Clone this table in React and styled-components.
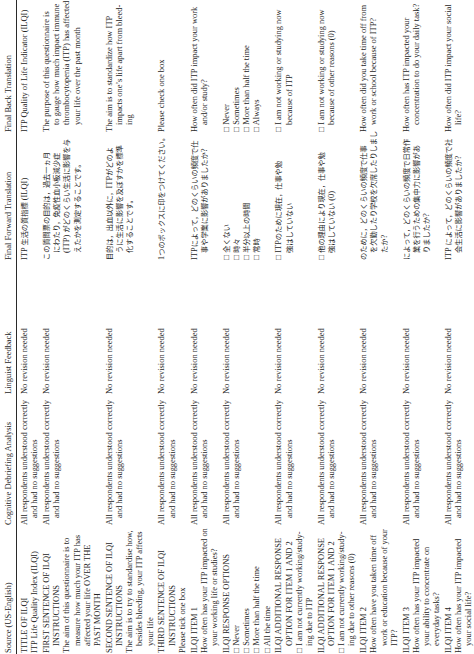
import React from "react";
import styled, { createGlobalStyle } from "styled-components";

const Global = createGlobalStyle`
  html, body { margin: 0; padding: 0; background: #ffffff; }
  body { overflow: hidden; }
`;

const Viewport = styled.div`
  width: 474px;
  height: 654px;
  overflow: hidden;
  position: relative;
  background: #ffffff;
`;

/* The page is a landscape table printed sideways: lay it out 654 wide, 474 tall, then turn it. */
const Sheet = styled.div`
  width: 654px;
  height: 474px;
  transform-origin: top left;
  transform: translateY(654px) rotate(-90deg);
  font-family: "Liberation Serif", "Noto Sans CJK JP", serif;
  font-size: 8.45px;
  line-height: 10.2px;
  color: #262626;
  overflow: hidden;
`;

const Table = styled.div`
  display: flex;
  flex-direction: column;
  padding-top: 1px;
`;

const COLS = "129px 131px 134px 128px 132px";

const HeaderRow = styled.div`
  display: grid;
  grid-template-columns: ${COLS};
  padding: 2px 0 3px;
  border-bottom: 1.2px solid #2a2a2a;
  margin-bottom: 1px;
`;

const Row = styled.div`
  display: grid;
  grid-template-columns: ${COLS};
  padding: 0.8px 0;
`;

const Cell = styled.div`
  padding-left: ${(p) => (p.$first ? "1px" : "0")};
  display: flex;
  flex-direction: column;
`;

const Para = styled.div`
  display: flex;
  flex-direction: column;
`;

const Line = styled.span`
  display: block;
  white-space: nowrap;
  padding-left: ${(p) => (p.$indent ? "7px" : "0")};
`;

const Jp = styled.span`
  font-family: "Noto Sans CJK JP", sans-serif;
  font-size: 7.2px;
`;

const CJK = /([\u3000-\u30ff\u4e00-\u9fff\uff00-\uffef]+)/;

function Mixed({ text }) {
  return text
    .split(CJK)
    .filter(Boolean)
    .map((part, i) => (CJK.test(part) ? <Jp key={i}>{part}</Jp> : <React.Fragment key={i}>{part}</React.Fragment>));
}

const COG = [["All respondents understood correctly", "and had no suggestions"]];
const LING = [["No revision needed"]];

const rows = [
  {
    src: [["TITLE OF ILQI"], ["ITP Life Quality Index (ILQI)"]],
    fft: [["ITP 生活の質指標 (ILQI)"]],
    fbt: [["ITP Quality of Life Indicator (ILQI)"]],
  },
  {
    src: [
      ["FIRST SENTENCE OF ILQI", "INSTRUCTIONS"],
      [
        "The aim of this questionnaire is to",
        "measure how much your ITP has",
        "affected your life OVER THE",
        "PAST MONTH",
      ],
    ],
    fft: [
      [
        "この質問票の目的は，過去一ヵ月",
        "にわたり，免疫性血小板減少症",
        "(ITP) がどのくらい生活に影響を与",
        "えたかを測定することです。",
      ],
    ],
    fbt: [
      [
        "The purpose of this questionnaire is",
        "to gauge how much impact immune",
        "thrombocytopenia (ITP) has affected",
        "your life over the past month",
      ],
    ],
  },
  {
    src: [
      ["SECOND SENTENCE OF ILQI", "INSTRUCTIONS"],
      [
        "The aim is to try to standardise how,",
        "besides bleeding, your ITP affects",
        "your life",
      ],
    ],
    fft: [
      [
        "目的は，出血以外に，ITPがどのよ",
        "うに生活に影響を及ぼすかを標準",
        "化することです。",
      ],
    ],
    fbt: [
      [
        "The aim is to standardize how ITP",
        "impacts one’s life apart from bleed-",
        "ing",
      ],
    ],
  },
  {
    src: [["THIRD SENTENCE OF ILQI", "INSTRUCTIONS"], ["Please tick one box"]],
    fft: [["1つのボックスに印をつけてください。"]],
    fbt: [["Please check one box"]],
  },
  {
    src: [
      ["ILQI ITEM 1"],
      ["How often has your ITP impacted on", "your working life or studies?"],
    ],
    fft: [["ITPによって，どのくらいの頻度で仕", "事や学業に影響がありましたか?"]],
    fbt: [["How often did ITP impact your work", "and/or study?"]],
  },
  {
    src: [
      ["ILQI RESPONSE OPTIONS"],
      ["□ Never"],
      ["□ Sometimes"],
      ["□ More than half the time"],
      ["□ All the time"],
    ],
    fft: [["□ 全くない"], ["□ 時々"], ["□ 半分以上の時間"], ["□ 常時"]],
    fbt: [["□ Never"], ["□ Sometimes"], ["□ More than half the time"], ["□ Always"]],
  },
  {
    src: [
      ["ILQI ADDITIONAL RESPONSE", "OPTION FOR ITEM 1 AND 2"],
      ["□ I am not currently working/study-", "ing due to ITP"],
    ],
    fft: [["□ ITPのために現在，仕事や勉", "強はしていない"]],
    fbt: [["□ I am not working or studying now", "because of ITP"]],
  },
  {
    src: [
      ["ILQI ADDITIONAL RESPONSE", "OPTION FOR ITEM 1 AND 2"],
      ["□ I am not currently working/study-", "ing due to other reasons (0)"],
    ],
    fft: [["□ 他の理由により現在，仕事や勉", "強はしていない (0)"]],
    fbt: [["□ I am not working or studying now", "because of other reasons (0)"]],
  },
  {
    src: [
      ["ILQI ITEM 2"],
      [
        "How often have you taken time off",
        "work or education because of your",
        "ITP?",
      ],
    ],
    fft: [
      [
        "のために，どのくらいの頻度で仕事",
        "を欠勤したり学校を欠席したりしまし",
        "たか?",
      ],
    ],
    fbt: [["How often did you take time off from", "work or school because of ITP?"]],
  },
  {
    src: [
      ["ILQI ITEM 3"],
      [
        "How often has your ITP impacted",
        "your ability to concentrate on",
        "everyday tasks?",
      ],
    ],
    fft: [
      [
        "によって，どのくらいの頻度で日常作",
        "業を行うための集中力に影響があ",
        "りましたか?",
      ],
    ],
    fbt: [["How often has ITP impacted your", "concentration to do your daily task?"]],
  },
  {
    src: [["ILQI ITEM 4"], ["How often has your ITP impacted", "your social life?"]],
    fft: [["ITP によって，どのくらいの頻度で社", "会生活に影響がありましたか?"]],
    fbt: [["How often did ITP impact your social", "life?"]],
  },
];

function CellText({ paras, jp, first }) {
  return (
    <Cell $first={first}>
      {paras.map((lines, i) => (
        <Para key={i}>
          {lines.map((l, j) => (
            <Line key={j} $indent={j > 0}>
              {jp ? <Mixed text={l} /> : l}
            </Line>
          ))}
        </Para>
      ))}
    </Cell>
  );
}

const headers = [
  "Source (US-English)",
  "Cognitive Debriefing Analysis",
  "Linguist Feedback",
  "Final Forward Translation",
  "Final Back Translation",
];

export default function App() {
  return (
    <>
      <Global />
      <Viewport>
        <Sheet>
          <Table>
            <HeaderRow>
              {headers.map((h, i) => (
                <Cell key={h} $first={i === 0}>
                  <Line>{h}</Line>
                </Cell>
              ))}
            </HeaderRow>
            {rows.map((r, i) => (
              <Row key={i}>
                <CellText paras={r.src} first />
                <CellText paras={COG} />
                <CellText paras={LING} />
                <CellText paras={r.fft} jp />
                <CellText paras={r.fbt} />
              </Row>
            ))}
          </Table>
        </Sheet>
      </Viewport>
    </>
  );
}
